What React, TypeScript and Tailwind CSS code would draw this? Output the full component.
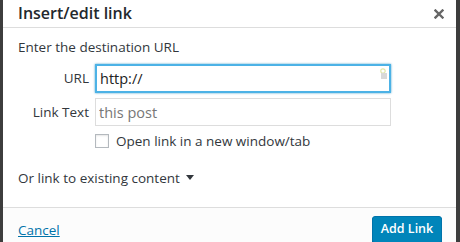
import React from 'react';

export default function App() {
  return (
    <div
      className="w-[460px] h-[242px] overflow-hidden bg-[#3d3d3d] pl-[3px] pr-[4px]"
      style={{ fontFamily: '"Open Sans", "Noto Sans", sans-serif' }}
    >
      <div className="h-full bg-white flex flex-col text-[#32373c] text-[13.5px]">
        {/* header */}
        <div className="h-[28px] shrink-0 border-b border-[#dddddd] flex items-center justify-between pl-[15px] pr-[12px]">
          <h1 className="text-[16px] font-semibold leading-none text-[#23282d] -mt-[2px]">Insert/edit link</h1>
          <svg width="10" height="10" viewBox="0 0 10 10" className="text-[#666]">
            <path d="M1.5 1.5 L8.5 8.5 M8.5 1.5 L1.5 8.5" stroke="currentColor" strokeWidth="2.4" strokeLinecap="square" />
          </svg>
        </div>

        {/* body */}
        <div className="flex-1 pl-[15px] pr-[65px]">
          <p className="mt-[10px] leading-[18px]">Enter the destination URL</p>
          <div className="mt-[8px] flex items-center">
            <label className="w-[77px] pr-[6px] text-right">URL</label>
            <div className="relative flex-1">
              <input
                readOnly
                value="http://"
                className="w-full h-[29px] border-2 border-[#4cb2e6] px-[3px] text-[14.5px] text-[#222] outline-none shadow-[0_0_2px_rgba(30,140,190,0.8)]"
              />
              <svg width="8" height="12" viewBox="0 0 8 12" className="absolute right-[3px] top-[4px]">
                <circle cx="3" cy="3" r="2.2" fill="none" stroke="#e0e6a8" strokeWidth="1.2" />
                <rect x="1" y="5" width="6" height="6" fill="#d8d8d8" />
              </svg>
            </div>
          </div>
          <div className="mt-[5px] flex items-center">
            <label className="w-[77px] pr-[6px] text-right">Link Text</label>
            <input
              readOnly
              value="this post"
              className="flex-1 h-[28px] border border-[#dddddd] px-[3px] text-[14.5px] text-[#777] outline-none"
            />
          </div>
          <div className="mt-[7px] ml-[77px] flex items-center gap-[7px]">
            <span className="w-[14px] h-[14px] border border-[#b4b9be] bg-white shadow-[inset_0_1px_2px_rgba(0,0,0,0.1)]" />
            <span className="leading-[16px]">Open link in a new window/tab</span>
          </div>
          <div className="mt-[19px] flex items-center gap-[6px]">
            <span>Or link to existing content</span>
            <svg width="8" height="6" viewBox="0 0 8 6">
              <path d="M0 0 L8 0 L4 5 Z" fill="#32373c" />
            </svg>
          </div>
        </div>

        {/* footer */}
        <div className="h-[35px] shrink-0 border-t border-[#dddddd] bg-[#fcfcfc] flex items-start justify-between pl-[15px] pr-[14px] pt-[8px]">
          <a className="text-[#0073aa] underline mt-[4px]">Cancel</a>
          <button className="w-[70px] h-[27px] rounded-[3px] bg-[#0085ba] border border-[#0073aa] text-white text-[12.5px] font-semibold shadow-[0_1px_0_#006799]">
            Add Link
          </button>
        </div>
      </div>
    </div>
  );
}
